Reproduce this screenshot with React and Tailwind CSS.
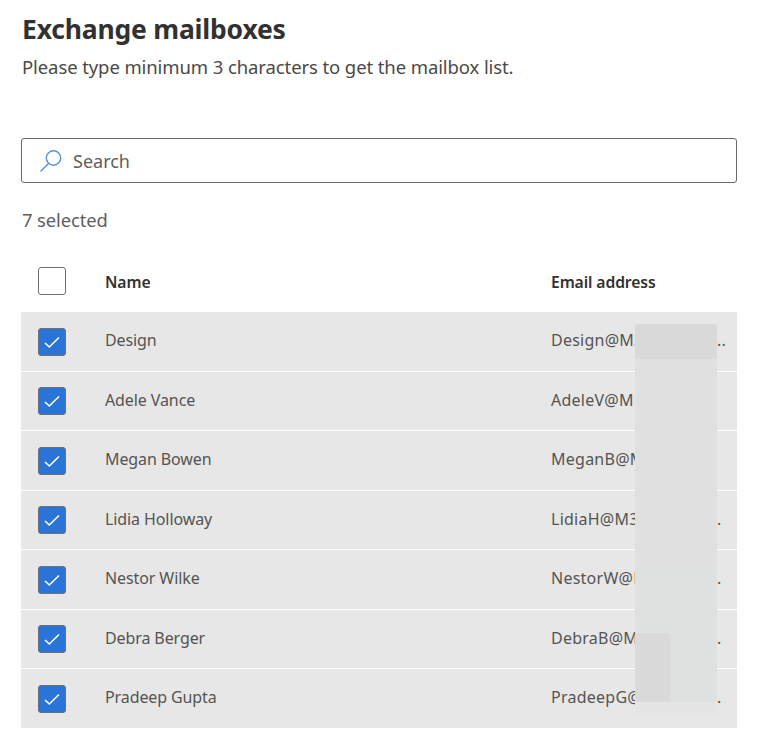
const rows = [
  ["Design", "Design@M3", ".."],
  ["Adele Vance", "AdeleV@M", ""],
  ["Megan Bowen", "MeganB@M", ""],
  ["Lidia Holloway", "LidiaH@M3", "."],
  ["Nestor Wilke", "NestorW@M", "."],
  ["Debra Berger", "DebraB@M", "."],
  ["Pradeep Gupta", "PradeepG@", "."],
];

function Check({ checked }) {
  return (
    <div className={`w-[28px] h-[28px] rounded-[3px] border border-[#6f6f6f] flex items-center justify-center ${checked ? "bg-[#2a74d8]" : "bg-white"}`}>
      {checked && (
        <svg width="18" height="18" viewBox="0 0 18 18" fill="none" stroke="#fff" strokeWidth="1.6">
          <path d="M2 10 L6.3 14 L16 4.5" />
        </svg>
      )}
    </div>
  );
}

export default function App() {
  return (
    <div className="relative w-[768px] h-[742px] bg-white overflow-hidden pl-[21px] pr-[31px] text-[#323130] font-['Noto_Sans',sans-serif]">
      <h1 className="pt-[11px] pl-px text-[26.5px] leading-[36px] font-bold tracking-[-0.2px]">Exchange mailboxes</h1>
      <p className="mt-[6px] pl-px text-[18.5px] leading-[28px] text-[#4a4948] tracking-[-0.1px]">Please type minimum 3 characters to get the mailbox list.</p>
      <div className="mt-[57px] h-[45px] rounded-[3px] border border-[#6a6a6a] flex items-center pl-[17px]">
        <svg width="24" height="24" viewBox="0 0 24 24" fill="none" stroke="#5b8fe0" strokeWidth="1.4">
          <circle cx="14.5" cy="9" r="7.2" />
          <path d="M9.5 14.5 L1.5 22.5" />
        </svg>
        <span className="ml-[10px] pt-[2px] text-[18px] text-[#605e5c]">Search</span>
      </div>
      <div className="mt-[23px] pl-px h-[28px] leading-[28px] text-[18.4px] text-[#605e5c] tracking-[-0.1px]">7 selected</div>
      <div className="mt-[19px] h-[59px] flex items-center text-[15.7px] font-semibold tracking-[-0.1px]">
        <div className="w-[84px] pl-[17px] pb-[3px]"><Check /></div>
        <div className="w-[446px]">Name</div>
        <div>Email address</div>
      </div>
      <div className="flex flex-col gap-px">
        {rows.map(([name, mail, tail]) => (
          <div key={name} className="h-[58.5px] bg-[#e7e7e7] flex items-center text-[16px] text-[#555453] tracking-[-0.1px]">
            <div className="w-[84px] pl-[17px] shrink-0 pt-[1px]"><Check checked /></div>
            <div className="w-[446px] shrink-0 pb-[2px]">{name}</div>
            <div className="flex-1 relative pb-[2px] tracking-[0.25px]">
              {mail}
              {tail && <span className="absolute left-[166px] top-0">{tail}</span>}
            </div>
          </div>
        ))}
      </div>
      <div className="absolute left-[635px] top-[324px] w-[82px] h-[392px] bg-[#e0e0e0]" />
      <div className="absolute left-[635px] top-[324px] w-[82px] h-[35px] bg-[#d9d9d9]" />
      <div className="absolute left-[635px] top-[564px] w-[82px] h-[138px] bg-[#dfe0e0]" />
      <div className="absolute left-[635px] top-[633px] w-[35px] h-[69px] bg-[#dadada]" />
      <div className="absolute left-[635px] top-[702px] w-[82px] h-[14px] bg-[#e5e5e5]" />
    </div>
  );
}
